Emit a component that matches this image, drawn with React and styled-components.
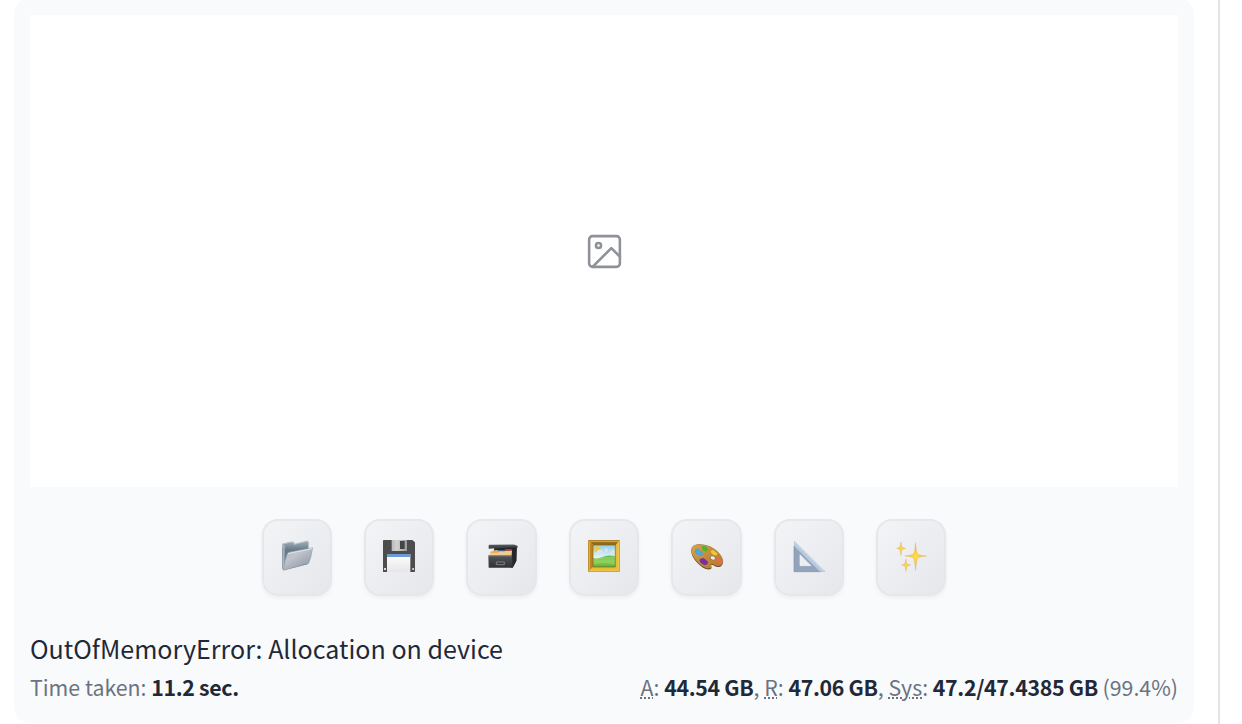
import React from "react";
import styled, { createGlobalStyle } from "styled-components";

const GlobalStyle = createGlobalStyle`
  * { box-sizing: border-box; }
  body { margin: 0; background: #fff; overflow: hidden; }
`;

const Page = styled.div`
  display: flex;
  height: 724px;
  padding-left: 14px;
  overflow: hidden;
  font-family: "Noto Sans CJK SC", "Noto Sans", sans-serif;
  color: #1f2937;
`;

const Panel = styled.main`
  display: flex;
  flex-direction: column;
  width: 1180px;
  height: 725px;
  margin-top: -2px;
  padding: 17px 16px 0;
  border-radius: 16px;
  background: #f9fafc;
`;

const Divider = styled.div`
  width: 2px;
  margin-left: 24px;
  background: #e4e4e7;
`;

const Gallery = styled.section`
  display: flex;
  align-items: center;
  justify-content: center;
  height: 472px;
  flex: none;
  width: 1148px;
  background: #fff;
`;

const EmptyIcon = styled.svg`
  display: block;
  width: 41px;
  height: 41px;
  fill: none;
  stroke: #8f9199;
  stroke-width: 1.5;
  stroke-linecap: round;
  stroke-linejoin: round;
`;

const Toolbar = styled.div`
  display: flex;
  justify-content: center;
  flex: none;
  gap: 32px;
  margin-top: 32px;
`;

const ToolButton = styled.button`
  display: flex;
  justify-content: center;
  align-items: flex-start;
  width: 70.4px;
  height: 77px;
  padding: 19px 0 0;
  border: 2px solid #e5e7eb;
  border-radius: 16px;
  background: linear-gradient(to bottom right, #f3f4f6, #e5e7eb);
  box-shadow: 0 2px 4px rgba(0, 0, 0, 0.05);
`;

const Glyph = styled.svg`
  display: block;
  flex: none;
  width: 32px;
  height: 32px;
  overflow: visible;
`;

const Message = styled.p`
  margin: 32px 0 0;
  font-size: 25.05px;
  line-height: 40px;
  white-space: nowrap;
`;

const Stats = styled.div`
  display: flex;
  justify-content: space-between;
  margin-top: 1px;
  font-size: 21.3px;
  line-height: 36px;
  white-space: nowrap;
  color: #6b7280;
`;

const Value = styled.strong`
  font-weight: 700;
  letter-spacing: -0.32px;
  color: #1f2937;
`;

const Abbr = styled.abbr`
  text-decoration: underline dotted 2px;
  text-underline-offset: 1px;
`;

const FolderIcon = () => (
  <Glyph viewBox="0 0 96 96">
    <defs>
      <linearGradient id="folderBack" x1="0" y1="0" x2="0" y2="1">
        <stop offset="0" stopColor="#a3b2bd" />
        <stop offset=".3" stopColor="#667b89" />
        <stop offset="1" stopColor="#697b88" />
      </linearGradient>
      <linearGradient id="folderFront" x1="0" y1="0" x2=".8" y2="1">
        <stop offset="0" stopColor="#b4bac4" />
        <stop offset=".4" stopColor="#c0c4cc" />
        <stop offset="1" stopColor="#8995a3" />
      </linearGradient>
    </defs>
    <path d="M4 12 L31 6 L39 7 L39 13 L80 3 L83 6 L80 73 L8 91 Q4 89 4 84Z" fill="url(#folderBack)" />
    <path d="M4 12 L31 6 L39 7 L39 13 L80 3" fill="none" stroke="#b5c1cb" strokeWidth="3" />
    <path d="M5 14 L9 18 L8 89" fill="none" stroke="#b2bdc6" strokeWidth="4" />
    <path d="M19 41 Q22 37 27 36 L95 23 Q91 52 83 70 L8 91 Q10 62 19 41Z" fill="url(#folderFront)" stroke="#929ba6" strokeWidth="1.5" />
    <path d="M21 41 L93 26" stroke="#e0e4e9" strokeWidth="3" />
  </Glyph>
);

const FloppyIcon = () => (
  <Glyph viewBox="0 0 96 96">
    <defs>
      <linearGradient id="floppyLabel" x1="0" y1="0" x2="0" y2="1">
        <stop offset="0" stopColor="#fff" />
        <stop offset="1" stopColor="#e6e6e6" />
      </linearGradient>
      <linearGradient id="floppyShutter">
        <stop offset="0" stopColor="#bbb" />
        <stop offset=".35" stopColor="#d2d2d2" />
        <stop offset="1" stopColor="#999" />
      </linearGradient>
    </defs>
    <path d="M0 2 Q0 0 2 0 H88 L96 7 V94 Q96 96 94 96 H0Z" fill="#4d4d4d" />
    <path d="M26 0 H72 V33 H26Z" fill="url(#floppyShutter)" />
    <path d="M51 3 H65 V27 H51Z" fill="#444" />
    <path d="M12 42 H82 V96 H12Z" fill="url(#floppyLabel)" />
    <path d="M12 42 H82 V51 H12Z" fill="#6f9bd4" />
    <path d="M3 84 H9 V90 H3Z M88 84 H93 V90 H88Z" fill="#d7d7d7" />
  </Glyph>
);

const CabinetIcon = () => (
  <Glyph viewBox="0 0 96 96">
    <defs>
      <linearGradient id="cabinetFront" x1="0" y1="0" x2="0" y2="1">
        <stop offset="0" stopColor="#65676a" />
        <stop offset=".2" stopColor="#4b4d50" />
        <stop offset="1" stopColor="#303234" />
      </linearGradient>
    </defs>
    <path d="M25 23 L93 17 L91 63 L80 83 L75 46 L22 43Z" fill="#242629" />
    <path d="M8 16 Q9 14 14 15 L85 14 L95 18 L94 25 L85 22 L8 26Z" fill="#434548" />
    <path d="M9 15 L85 15" stroke="#797b7e" strokeWidth="2" />
    <path d="M12 37 L18 32 L35 30 L37 33 L78 31 L77 47 H10Z" fill="#edce91" />
    <path d="M16 35 L36 31 L39 36 L34 38 H14Z" fill="#efa346" />
    <path d="M34 30 H54 L56 34 H37Z" fill="#40659e" />
    <path d="M56 27 H76 L78 32 H58Z" fill="#b94237" />
    <path d="M77 45 L91 22 V62 L80 83 L75 83Z" fill="#242628" />
    <path d="M7 46 H78 L80 83 H8Z" fill="url(#cabinetFront)" />
    <path d="M8 47 H77" stroke="#85878a" strokeWidth="2" />
    <path d="M31 66 H55 V74 H31Z" fill="#37393b" stroke="#a2a3a5" strokeWidth="2" />
  </Glyph>
);

const FrameIcon = () => (
  <Glyph viewBox="0 0 96 96">
    <defs>
      <linearGradient id="frameSky" x1="0" y1="0" x2="0" y2="1">
        <stop offset="0" stopColor="#8dcfeb" />
        <stop offset=".6" stopColor="#eaf5f8" />
      </linearGradient>
      <linearGradient id="frameGrass" x1="0" y1="0" x2="0" y2="1">
        <stop offset="0" stopColor="#65b84b" />
        <stop offset=".5" stopColor="#91d45c" />
        <stop offset="1" stopColor="#5bad35" />
      </linearGradient>
    </defs>
    <path d="M1 1 H95 V95 H1Z" fill="#e8bd37" />
    <path d="M1 1 H95 L82 16 H16Z" fill="#8e681b" />
    <path d="M1 1 L16 16 V80 L1 95Z" fill="#b98322" />
    <path d="M1 95 L16 80 H82 L95 95Z" fill="#eabc32" />
    <path d="M2 2 H94 V94 H2Z" fill="none" stroke="#bd8826" strokeWidth="2" />
    <path d="M5 5 H91 V91 H5Z" fill="none" stroke="#f3d365" strokeWidth="2" />
    <path d="M15 15 H82 V81 H15Z" fill="url(#frameSky)" />
    <circle cx="28" cy="28" r="9" fill="#f5c931" />
    <path d="M24 37 Q31 27 39 29 Q46 34 47 40 L37 44 Q27 45 24 37 M49 29 Q54 22 59 26 L59 36 L52 35Z M66 38 Q75 24 80 30 L81 44 Q74 46 66 38" fill="#dce2ee" />
    <path d="M15 54 Q28 57 42 52 Q55 43 82 48 V81 H15Z" fill="url(#frameGrass)" />
    <path d="M17 62 Q35 53 55 54 T82 50 M17 72 Q36 62 60 68 T82 65" fill="none" stroke="#8fcf63" strokeWidth="4" />
    <path d="M15 15 H82 V81 H15Z" fill="none" stroke="#856019" strokeWidth="2" />
  </Glyph>
);

const PaletteIcon = () => (
  <Glyph viewBox="0 0 96 96">
    <defs>
      <linearGradient id="paletteWood" x1="0" y1="0" x2="1" y2="1">
        <stop offset="0" stopColor="#d8a452" />
        <stop offset=".5" stopColor="#c28b3a" />
        <stop offset="1" stopColor="#b9792f" />
      </linearGradient>
    </defs>
    <g transform="translate(1.5 1)">
      <path d="M3 29 C4 17 16 11 35 13 C58 14 84 30 94 52 C101 68 95 79 85 80 C75 81 68 72 63 73 C58 74 65 81 62 85 C54 92 34 83 21 68 C10 56 1 42 3 29Z" fill="#654222" />
      <path d="M3 27 C4 15 16 11 35 13 C58 14 84 30 94 51 C101 66 94 77 85 77 C75 78 68 69 63 70 C58 71 65 78 62 82 C54 88 34 80 21 65 C10 53 1 39 3 27Z" fill="url(#paletteWood)" stroke="#b1823e" strokeWidth="1" />
      <ellipse cx="67" cy="53" rx="8" ry="6" transform="rotate(20 67 53)" fill="#eeeef0" stroke="#68451e" strokeWidth="1.5" />
      <path d="M14 27 L24 24 L28 31 L36 33 L37 42 L31 48 L24 44 L16 41 L13 34Z" fill="#46a6d6" />
      <path d="M34 21 Q35 14 42 17 L49 20 L53 29 L47 34 L36 29Z" fill="#50b52e" />
      <path d="M60 32 L69 29 L74 34 L81 39 L79 45 L70 45 L63 39Z" fill="#edcb2e" />
      <path d="M77 53 L84 51 L90 57 L96 64 L92 70 L84 66 L78 60Z" fill="#e46c55" />
      <path d="M28 56 L39 53 L46 58 L53 65 L51 72 L42 75 L34 70 L28 64Z" fill="#78309f" />
      <path d="M19 32 L29 39" stroke="#8abcdc" strokeWidth="2" opacity=".7" />
    </g>
  </Glyph>
);

const TriangleIcon = () => (
  <Glyph viewBox="0 0 96 96">
    <path d="M3 2 L97 95 H3Z M21 44 V77 H54Z" fill="#92a3bc" fillRule="evenodd" />
    <path d="M3 2 L97 95 H81 L3 18Z" fill="#b7cadf" />
    <path d="M4 6 L94 95" stroke="#d6e3ed" strokeWidth="3" />
    <path d="M3 18 V95 H81" fill="none" stroke="#8193ab" strokeWidth="2" />
    <path d="M21 44 V77 H54Z" fill="none" stroke="#f3f4f7" strokeWidth="2" />
    <path d="M10 19 L13 16 M19 28 L22 25 M28 37 L31 34 M37 46 L40 43 M46 55 L49 52 M55 64 L58 61 M64 73 L67 70 M73 82 L76 79" stroke="#8fa4bd" strokeWidth="1" />
  </Glyph>
);

const SparklesIcon = () => (
  <Glyph viewBox="0 0 96 96">
    <defs>
      <radialGradient id="sparkleFill">
        <stop offset="0" stopColor="#ffe046" />
        <stop offset=".5" stopColor="#f4c746" />
        <stop offset="1" stopColor="#e1905b" />
      </radialGradient>
    </defs>
    <g fill="url(#sparkleFill)" stroke="#e9ad58" strokeWidth="1" transform="translate(2 0)">
      <path d="M60 8 Q62 39 67 43 Q72 47 93 48 Q72 50 67 54 Q62 59 60 91 Q57 60 53 54 Q48 49 27 48 Q48 46 53 42 Q57 37 60 8Z" />
      <path d="M16 6 Q17 20 20 22 Q22 24 30 25 Q22 26 20 29 Q17 32 16 47 Q14 32 12 29 Q10 26 3 25 Q10 24 12 21 Q14 18 16 6Z" />
      <path d="M31 57 Q32 70 35 72 Q37 74 45 75 Q37 76 35 79 Q32 82 31 94 Q29 81 27 78 Q25 76 18 75 Q25 74 27 71 Q29 68 31 57Z" />
    </g>
  </Glyph>
);

const tools = [
  ["Open folder", FolderIcon],
  ["Save", FloppyIcon],
  ["Save archive", CabinetIcon],
  ["Send image", FrameIcon],
  ["Inpaint", PaletteIcon],
  ["Extras", TriangleIcon],
  ["Upscale", SparklesIcon],
];

export default function App() {
  return (
    <Page>
      <GlobalStyle />
      <Panel>
        <Gallery>
          <EmptyIcon viewBox="0 0 24 24">
            <rect x="3" y="3" width="18" height="18" rx="2" />
            <circle cx="8.5" cy="8.5" r="1.5" />
            <path d="M21 15 L16 10 L5 21" />
          </EmptyIcon>
        </Gallery>
        <Toolbar>
          {tools.map(([label, Icon]) => (
            <ToolButton key={label} aria-label={label}>
              <Icon />
            </ToolButton>
          ))}
        </Toolbar>
        <Message>OutOfMemoryError: Allocation on device</Message>
        <Stats>
          <span>Time taken: <Value>11.2 sec.</Value></span>
          <span>
            <Abbr>A</Abbr>: <Value>44.54 GB</Value>, <Abbr>R</Abbr>: <Value>47.06 GB</Value>, <Abbr>Sys</Abbr>: <Value>47.2/47.4385 GB</Value> (99.4%)
          </span>
        </Stats>
      </Panel>
      <Divider />
    </Page>
  );
}
